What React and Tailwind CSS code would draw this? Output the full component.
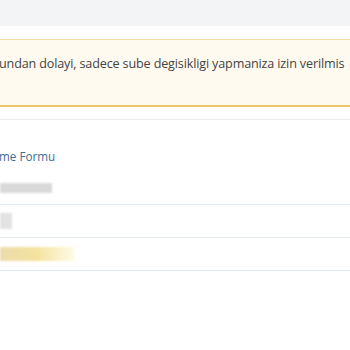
export default function App() {
  return (
    <div className="w-[350px] h-[350px] overflow-hidden bg-white" style={{ fontFamily: '"Open Sans", sans-serif' }}>
      <div className="h-[26px] bg-[#f3f4f6]" />
      <div className="h-[13px]" />
      <div className="h-[68px] bg-[#fffaf0] border-t border-t-[#f3dca8] border-b-2 border-b-[#eec56b] flex items-start pt-[14px]">
        <p className="whitespace-nowrap text-[12.6px] tracking-[-0.15px] leading-[20px] text-[#444] -ml-[1px]">undan dolayi, sadece sube degisikligi yapmaniza izin verilmis</p>
      </div>
      <div className="h-[12px]" />
      <div className="h-px bg-[#ececec]" />
      <div className="pt-[27px] pb-[7px]">
        <p className="whitespace-nowrap text-[11.7px] leading-[18px] text-[#3c6d95] -ml-[1px]">me Formu</p>
      </div>
      <div className="h-[33px] flex items-center border-b border-b-[#e3ebf3]">
        <div className="w-[52px] h-[10px] bg-[#d9d9d9] blur-[1px]" />
      </div>
      <div className="h-[33px] flex items-center border-b border-b-[#e3ebf3]">
        <div className="w-[12px] h-[16px] bg-[#e2e2e2] blur-[1px]" />
      </div>
      <div className="h-[33px] flex items-center border-b border-b-[#e3ebf3]">
        <div className="w-[75px] h-[14px] bg-gradient-to-r from-[#ecdcaa] via-[#f5e39e] to-[#fffbea] blur-[1px]" />
      </div>
    </div>
  );
}
